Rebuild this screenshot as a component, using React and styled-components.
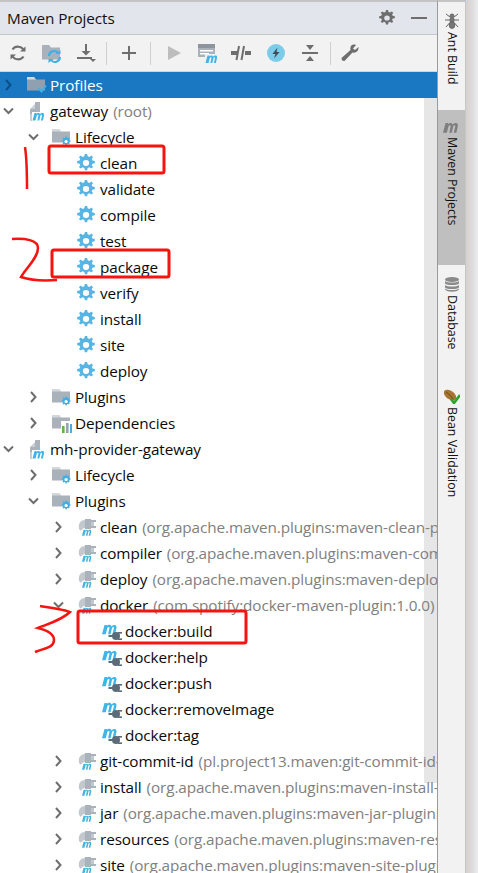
import React from "react";
import styled, { createGlobalStyle } from "styled-components";

const Global = createGlobalStyle`
  html, body { margin: 0; padding: 0; background: #fff; }
  body { font-family: "Open Sans", "Noto Sans", sans-serif; overflow: hidden; }
`;

const Page = styled.div`
  position: relative;
  width: 478px;
  height: 873px;
  display: flex;
  overflow: hidden;
`;
const Panel = styled.div`
  width: 437px;
  display: flex;
  flex-direction: column;
  border-top: 2px solid #c4c4c4;
  box-sizing: border-box;
`;
const Header = styled.div`
  height: 32px;
  display: flex;
  align-items: center;
  background: #e2e5ec;
  border-bottom: 1px solid #c6c6c6;
  padding: 0 10px 0 7px;
  gap: 16px;
`;
const Title = styled.div`
  flex: 1;
  font-size: 15.3px;
  color: #111;
  letter-spacing: -0.1px;
`;
const Toolbar = styled.div`
  height: 36px;
  display: flex;
  align-items: center;
  background: #f2f2f2;
  border-bottom: 1px solid #d4d4d4;
  padding-left: 5px;
`;
const Tool = styled.div`
  width: 26px;
  height: 26px;
  margin-right: ${(p) => p.$gap ?? 8}px;
  display: flex;
  align-items: center;
  justify-content: center;
`;
const Sep = styled.div`
  width: 1px;
  height: 23px;
  background: #cfcfcf;
  margin-right: ${(p) => p.$gap ?? 9}px;
`;
const Tree = styled.div`
  flex: 1;
  position: relative;
  overflow: hidden;
`;
const ScrollThumb = styled.div`
  position: absolute;
  right: 0;
  top: 26px;
  width: 13px;
  height: 685px;
  background: #e6e6e6;
`;
const SelectedEdge = styled.div`
  position: absolute;
  right: 0;
  top: 0;
  width: 13px;
  height: 26px;
  background: #0b62a8;
`;
const Row = styled.div`
  position: relative;
  height: 26px;
  display: flex;
  align-items: center;
  padding-left: ${(p) => p.$depth * 25}px;
  background: ${(p) => (p.$selected ? "#1a78c2" : "transparent")};
  color: ${(p) => (p.$selected ? "#fff" : "#0a0a0a")};
  font-size: 15.3px;
  white-space: nowrap;
`;
const Twisty = styled.div`
  flex: none;
  width: 25px;
  height: 26px;
  display: flex;
  align-items: center;
  padding-left: 3px;
  box-sizing: border-box;
`;
const IconBox = styled.div`
  flex: none;
  width: 25px;
  height: 26px;
  display: flex;
  align-items: center;
  padding-left: 2px;
  box-sizing: border-box;
`;
const Label = styled.span`
  letter-spacing: -0.1px;
`;
const Hint = styled.span`
  color: #808080;
  margin-left: 5px;
  letter-spacing: -0.1px;
`;
const Stripe = styled.div`
  width: 29px;
  box-sizing: border-box;
  border-left: 1px solid #9a9a9a;
  border-right: 1px solid #e2ca6e;
  border-top: 2px solid #c4c4c4;
  background: #f2f2f2;
  display: flex;
  flex-direction: column;
  align-items: center;
`;
const StripeItem = styled.div`
  width: 100%;
  height: ${(p) => p.$h}px;
  padding-top: ${(p) => p.$pt}px;
  box-sizing: border-box;
  display: flex;
  flex-direction: column;
  align-items: center;
  gap: 3px;
  background: ${(p) => (p.$active ? "#bfbfbf" : "transparent")};
`;
const StripeText = styled.div`
  writing-mode: vertical-rl;
  font-size: 12.4px;
  color: #111;
  line-height: 16px;
  white-space: nowrap;
`;
const Edge = styled.div`
  flex: 1;
  background: linear-gradient(to right, #d2d2d2, #dcdcdc 50%, #ececec);
`;
const Overlay = styled.svg`
  position: absolute;
  left: 0;
  top: 0;
  pointer-events: none;
`;

const Chevron = ({ open, color = "#6e6e6e" }) => (
  <svg width="12" height="12" viewBox="0 0 12 12" fill="none" stroke={color} strokeWidth="2">
    {open ? <path d="M1 3.5 L5.5 8 L10 3.5" /> : <path d="M3 1 L7.5 6 L3 11" />}
  </svg>
);

const Folder = ({ children, tone = "#a9b2ba" }) => (
  <svg width="20" height="20" viewBox="0 0 20 20">
    <path d="M0 2 h7 l2 2.5 h9 v11 h-18 z" fill={tone} />
    <path d="M0 2 h7 l2 2.5 h-9 z" fill="#d3d7da" />
    {children}
  </svg>
);

const gearPath = "M8 0 h2.4 l.5 2.4 1.8.8 2-1.4 1.7 1.7 -1.4 2 .8 1.8 2.4.5 v2.4 l-2.4.5 -.8 1.8 1.4 2 -1.7 1.7 -2-1.4 -1.8.8 -.5 2.4 h-2.4 l-.5-2.4 -1.8-.8 -2 1.4 -1.7-1.7 1.4-2 -.8-1.8 -2.4-.5 v-2.4 l2.4-.5 .8-1.8 -1.4-2 1.7-1.7 2 1.4 1.8-.8z";

const Gear = ({ size = 18, color = "#56b5e3", hole = "#fff" }) => (
  <svg width={size} height={size} viewBox="0 0 18.4 20" preserveAspectRatio="none">
    <path d={gearPath} fill={color} />
    <circle cx="9.2" cy="10" r="3.2" fill={hole} />
  </svg>
);

const FolderGear = () => (
  <Folder>
    <g transform="translate(9.5 9.5) scale(.5)">
      <path d={gearPath} fill="#43aee3" />
      <circle cx="9.2" cy="10" r="3.2" fill="#fff" />
    </g>
  </Folder>
);
const FolderDeps = () => (
  <Folder>
    <rect x="9" y="8" width="11" height="12" fill="#fff" />
    <rect x="10" y="13" width="2.6" height="7" fill="#62b543" />
    <rect x="14" y="10" width="2.6" height="10" fill="#9aa3ab" />
    <rect x="18" y="11" width="2.4" height="9" fill="#43aee3" />
  </Folder>
);
const FolderProfiles = () => (
  <Folder tone="#8fa0b0">
    <path d="M11.5 13 l3 3.5 l4.5-6" fill="none" stroke="#3fb0ea" strokeWidth="2" />
  </Folder>
);
const MLetter = ({ x, y, s = 1, color = "#3fb4e8" }) => (
  <path
    transform={`translate(${x} ${y}) scale(${s})`}
    d="M0 9 L2 1.5 H4 L3.8 2.6 C5 1 7 1 7.6 2.8 C8.8 1 12 1 11.6 3.6 L10.4 9 H8.4 L9.6 3.8 C9.7 3 8.4 3 8 4 L6.8 9 H4.9 L6 3.8 C6.1 3 4.8 3 4.3 4 L3 9 Z"
    fill={color}
  />
);
const MavenFile = () => (
  <svg width="20" height="20" viewBox="0 0 20 20">
    <path d="M3 8 L8 3 V8 Z" fill="#c9ced3" />
    <path d="M8 1 h5 v12 h-10 v-5 h5 z" fill="#aab3bb" />
    <path d="M3 13 h6 v7 h-6z" fill="#c9ced3" />
    <rect x="5" y="11" width="15" height="9" fill="#fff" />
    <MLetter x={5.5} y={10.5} />
  </svg>
);
const PluginIcon = () => (
  <svg width="20" height="20" viewBox="0 0 20 20">
    <path d="M2 12 C1 6 4 3 8 3 h9 v8 h-9 C6 11 5 12 4 14z" fill="#c2c8cd" />
    <rect x="8" y="2" width="6" height="10" fill="#aab3bb" />
    <rect x="13" y="3" width="6" height="2" fill="#aab3bb" />
    <rect x="13" y="9" width="6" height="2" fill="#aab3bb" />
    <rect x="4" y="13" width="16" height="7" fill="#fff" />
    <MLetter x={5} y={11.5} s={0.8} />
  </svg>
);
const Goal = () => (
  <svg width="20" height="20" viewBox="0 0 20 20">
    <MLetter x={0} y={2} s={1.25} />
    <circle cx="14" cy="15" r="4" fill="#5b6b78" />
    <rect x="6.5" y="14" width="4" height="2" fill="#5b6b78" />
    <rect x="16" y="11" width="4" height="1.6" fill="#5b6b78" />
    <rect x="16" y="17.4" width="4" height="1.6" fill="#5b6b78" />
  </svg>
);

const I = "#6e6e6e";
const RefreshIcon = () => (
  <svg width="18" height="18" viewBox="0 0 18 18" fill="none" stroke={I} strokeWidth="2.2">
    <path d="M15 7 A6.5 6.5 0 0 0 3.5 5.5" />
    <path d="M3 11 A6.5 6.5 0 0 0 14.5 12.5" />
    <path d="M11 7.5 h5.5 v-5z" fill={I} stroke="none" />
    <path d="M7 10.5 h-5.5 v5z" fill={I} stroke="none" />
  </svg>
);
const FolderSync = () => (
  <svg width="22" height="22" viewBox="0 0 22 22">
    <path d="M1 3 h7 l2 2.5 h9 v12 h-18z" fill="#a9b2ba" />
    <path d="M8 14 A5 5 0 0 1 17 11" fill="none" stroke="#3fb0ea" strokeWidth="2" />
    <path d="M19 15 A5 5 0 0 1 10 18" fill="none" stroke="#3fb0ea" strokeWidth="2" />
    <path d="M14.5 12 h5 v-4z" fill="#3fb0ea" />
    <path d="M12.5 17 h-5 v4z" fill="#3fb0ea" />
    <path d="M7 12 h2 v2 h-2z" fill="#3fb0ea" />
  </svg>
);
const DownloadIcon = () => (
  <svg width="20" height="20" viewBox="0 0 20 20">
    <path d="M8 1 h2 v7 h3.5 l-4.5 4.5 l-4.5-4.5 h3.5z" fill={I} />
    <rect x="0" y="14" width="15" height="2" fill={I} />
    <path d="M13 16 h6 l-3 3z" fill={I} />
  </svg>
);
const PlusIcon = () => (
  <svg width="14" height="14" viewBox="0 0 14 14">
    <path d="M6 0 h2 v6 h6 v2 h-6 v6 h-2 v-6 h-6 v-2 h6z" fill={I} />
  </svg>
);
const PlayIcon = () => (
  <svg width="14" height="16" viewBox="0 0 14 16">
    <path d="M0 1 L13 8 L0 15z" fill="#bdbdbd" />
  </svg>
);
const RunConfig = () => (
  <svg width="22" height="20" viewBox="0 0 22 20">
    <path d="M1 1 h17 v4 h-17z" fill="#8c959d" />
    <path d="M1 5 h17 v9 h-17z" fill="#a9b2ba" />
    <rect x="3" y="7" width="13" height="1.5" fill="#fff" />
    <rect x="3" y="10" width="9" height="1.5" fill="#fff" />
    <rect x="8" y="11" width="14" height="9" fill="#f2f2f2" />
    <MLetter x={8.5} y={11} />
  </svg>
);
const SkipIcon = () => (
  <svg width="20" height="16" viewBox="0 0 20 16">
    <rect x="0" y="6" width="6" height="4" fill={I} />
    <rect x="14" y="6" width="6" height="4" fill={I} />
    <path d="M8 1 L5.5 15" stroke={I} strokeWidth="2" />
    <path d="M13 1 L10.5 15" stroke={I} strokeWidth="2" />
  </svg>
);
const BoltIcon = () => (
  <svg width="18" height="18" viewBox="0 0 18 18">
    <circle cx="9" cy="9" r="9" fill="#7ccbe8" />
    <path d="M10.5 3.5 L5.5 10 H8.5 L7 14.5 L12.5 8 H9.5z" fill="#3f4a54" />
  </svg>
);
const CollapseIcon = () => (
  <svg width="16" height="18" viewBox="0 0 16 18">
    <path d="M4 1 h8 l-4 5z" fill={I} />
    <rect x="0" y="8" width="16" height="2" fill={I} />
    <path d="M4 17 h8 l-4 -5z" fill={I} />
  </svg>
);
const WrenchIcon = () => (
  <svg width="18" height="18" viewBox="0 0 18 18">
    <path d="M17.5 3 L14 6 L12 4.5 L15 1 C11.5 -.5 8.5 2 9.5 6 L.5 14 L1 16.5 L3.5 17 L11.5 8.5 C15 9.5 18 7 17.5 3z" fill={I} />
  </svg>
);
const MinusIcon = () => (
  <svg width="16" height="4" viewBox="0 0 16 4">
    <rect y="1" width="16" height="2" fill={I} />
  </svg>
);
const AntIcon = () => (
  <svg width="14" height="16" viewBox="0 0 14 16" stroke="#666" strokeWidth="1" fill="#777">
    <ellipse cx="7" cy="3" rx="2" ry="2" />
    <ellipse cx="7" cy="7" rx="2.4" ry="2" />
    <ellipse cx="7" cy="12" rx="2.8" ry="3.4" />
    <path d="M1 1 L5 4 M13 1 L9 4 M0 7 H4 M14 7 H10 M1 14 L4.5 10 M13 14 L9.5 10" fill="none" />
  </svg>
);
const DbIcon = () => (
  <svg width="14" height="15" viewBox="0 0 14 15">
    <ellipse cx="7" cy="2.5" rx="7" ry="2.5" fill="#8a8a8a" />
    <path d="M0 4 C2 6 12 6 14 4 V6.5 C12 8.5 2 8.5 0 6.5z" fill="#8a8a8a" />
    <path d="M0 8 C2 10 12 10 14 8 V10.5 C12 12.5 2 12.5 0 10.5z" fill="#8a8a8a" />
    <path d="M0 11.5 C2 13.5 12 13.5 14 11.5 V12.5 C12 15.5 2 15.5 0 12.5z" fill="#8a8a8a" />
  </svg>
);
const BeanIcon = () => (
  <svg width="16" height="15" viewBox="0 0 16 15">
    <ellipse cx="6" cy="6" rx="7" ry="4.2" transform="rotate(35 6 6)" fill="#a87432" />
    <path d="M2 3 C5 5 7 7 9 10" stroke="#6b4a20" strokeWidth="1" fill="none" />
    <path d="M7 10 L10 14 L16 6" stroke="#2aa52a" strokeWidth="2.6" fill="none" />
  </svg>
);
const MGray = () => (
  <svg width="18" height="13" viewBox="0 0 14 10">
    <MLetter x={0} y={0} color="#7e7e7e" />
  </svg>
);

const rows = [
  { d: 0, t: "closed", i: <FolderProfiles />, l: "Profiles", sel: true },
  { d: 0, t: "open", i: <MavenFile />, l: "gateway", h: "(root)" },
  { d: 1, t: "open", i: <FolderGear />, l: "Lifecycle" },
  { d: 2, i: <Gear />, l: "clean" },
  { d: 2, i: <Gear />, l: "validate" },
  { d: 2, i: <Gear />, l: "compile" },
  { d: 2, i: <Gear />, l: "test" },
  { d: 2, i: <Gear />, l: "package" },
  { d: 2, i: <Gear />, l: "verify" },
  { d: 2, i: <Gear />, l: "install" },
  { d: 2, i: <Gear />, l: "site" },
  { d: 2, i: <Gear />, l: "deploy" },
  { d: 1, t: "closed", i: <FolderGear />, l: "Plugins" },
  { d: 1, t: "closed", i: <FolderDeps />, l: "Dependencies" },
  { d: 0, t: "open", i: <MavenFile />, l: "mh-provider-gateway" },
  { d: 1, t: "closed", i: <FolderGear />, l: "Lifecycle" },
  { d: 1, t: "open", i: <FolderGear />, l: "Plugins" },
  { d: 2, t: "closed", i: <PluginIcon />, l: "clean", h: "(org.apache.maven.plugins:maven-clean-plugin:2.5)" },
  { d: 2, t: "closed", i: <PluginIcon />, l: "compiler", h: "(org.apache.maven.plugins:maven-compiler-plugin:3.1)" },
  { d: 2, t: "closed", i: <PluginIcon />, l: "deploy", h: "(org.apache.maven.plugins:maven-deploy-plugin:2.7)" },
  { d: 2, t: "open", i: <PluginIcon />, l: "docker", h: "(com.spotify:docker-maven-plugin:1.0.0)" },
  { d: 3, i: <Goal />, l: "docker:build" },
  { d: 3, i: <Goal />, l: "docker:help" },
  { d: 3, i: <Goal />, l: "docker:push" },
  { d: 3, i: <Goal />, l: "docker:removeImage" },
  { d: 3, i: <Goal />, l: "docker:tag" },
  { d: 2, t: "closed", i: <PluginIcon />, l: "git-commit-id", h: "(pl.project13.maven:git-commit-id-plugin:2.2.4)" },
  { d: 2, t: "closed", i: <PluginIcon />, l: "install", h: "(org.apache.maven.plugins:maven-install-plugin:2.4)" },
  { d: 2, t: "closed", i: <PluginIcon />, l: "jar", h: "(org.apache.maven.plugins:maven-jar-plugin:2.4)" },
  { d: 2, t: "closed", i: <PluginIcon />, l: "resources", h: "(org.apache.maven.plugins:maven-resources-plugin:2.6)" },
  { d: 2, t: "closed", i: <PluginIcon />, l: "site", h: "(org.apache.maven.plugins:maven-site-plugin:3.3)" },
];

const RedBox = ({ x, y, w, h }) => (
  <rect x={x} y={y} width={w} height={h} rx="2" fill="none" stroke="#f5140f" strokeWidth="3" />
);

export default function App() {
  return (
    <Page>
      <Global />
      <Panel>
        <Header>
          <Title>Maven Projects</Title>
          <Gear size={16} color="#6e6e6e" hole="#e2e5ec" />
          <MinusIcon />
        </Header>
        <Toolbar>
          <Tool $gap={8}><RefreshIcon /></Tool>
          <Tool $gap={9}><FolderSync /></Tool>
          <Tool $gap={6}><DownloadIcon /></Tool>
          <Sep $gap={9} />
          <Tool $gap={8}><PlusIcon /></Tool>
          <Sep $gap={11} />
          <Tool $gap={7}><PlayIcon /></Tool>
          <Tool $gap={7}><RunConfig /></Tool>
          <Tool $gap={9}><SkipIcon /></Tool>
          <Tool $gap={8}><BoltIcon /></Tool>
          <Tool $gap={7}><CollapseIcon /></Tool>
          <Sep $gap={6} />
          <Tool><WrenchIcon /></Tool>
        </Toolbar>
        <Tree>
          <ScrollThumb />
          <SelectedEdge />
          {rows.map((r, idx) => (
            <Row key={idx} $depth={r.d} $selected={r.sel}>
              <Twisty>
                {r.t && <Chevron open={r.t === "open"} color={r.sel ? "#0b4f8a" : "#6e6e6e"} />}
              </Twisty>
              <IconBox>{r.i}</IconBox>
              <Label>{r.l}</Label>
              {r.h && <Hint>{r.h}</Hint>}
            </Row>
          ))}
        </Tree>
      </Panel>
      <Stripe>
        <StripeItem $h={108} $pt={11}>
          <AntIcon />
          <StripeText>Ant Build</StripeText>
        </StripeItem>
        <StripeItem $h={155} $pt={11} $active>
          <MGray />
          <StripeText>Maven Projects</StripeText>
        </StripeItem>
        <StripeItem $h={112} $pt={12}>
          <DbIcon />
          <StripeText>Database</StripeText>
        </StripeItem>
        <StripeItem $h={130} $pt={12}>
          <BeanIcon />
          <StripeText>Bean Validation</StripeText>
        </StripeItem>
      </Stripe>
      <Edge />
      <Overlay width="478" height="873" viewBox="0 0 478 873">
        <RedBox x={49} y={146} w={115} h={27} />
        <RedBox x={52} y={250} w={117} h={27} />
        <RedBox x={78} y={611} w={168} h={32} />
        <path d="M25 147 C27 160 27 175 27 189" fill="none" stroke="#f5140f" strokeWidth="2.5" />
        <path d="M12 239 C25 238 38 240 38 248 C38 258 26 268 21 277 C30 280 45 281 57 280" fill="none" stroke="#f5140f" strokeWidth="2.5" />
        <path d="M40 606 C52 608 66 610 70 612 C62 620 48 624 38 628 C46 630 54 633 54 640 C54 648 44 648 35 652" fill="none" stroke="#f5140f" strokeWidth="2.5" />
      </Overlay>
    </Page>
  );
}
